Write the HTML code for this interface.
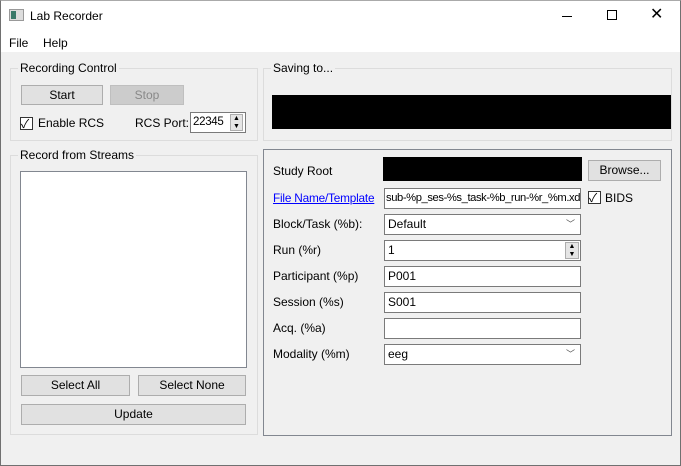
<!DOCTYPE html>
<html><head><style>
*{box-sizing:border-box;margin:0;padding:0}
body{width:681px;height:466px;background:#f0f0f0;font-family:"Liberation Sans","Noto Sans CJK JP",sans-serif;font-size:12px;color:#000;position:relative;overflow:hidden}
.a{position:absolute}
.win{left:0;top:0;width:681px;height:466px;border:1px solid #707070;border-top-color:#aaa}
.gb{border:1px solid #dcdcdc}
.lbl{background:#f0f0f0;padding:0 2px;white-space:nowrap}
.btn{background:#e1e1e1;border:1px solid #adadad;text-align:center;line-height:18px}
.inp{background:#fff;border:1px solid #7a7a7a;padding-left:3px;line-height:18px;white-space:nowrap;overflow:hidden}
.chk{width:13px;height:13px;border:1px solid #333;background:#fff}
</style></head><body>
<div class="a" style="left:0;top:0;width:681px;height:52px;background:#fff"></div>
<div class="a win"></div>
<div class="a" style="left:9px;top:9px;width:15px;height:12px;border:1px solid #999;background:#ddd"><div style="margin:1px;width:5px;height:8px;background:#3a7a6a"></div></div>
<div class="a" style="left:30px;top:9px;font-size:12px">Lab Recorder</div>
<div class="a" style="left:562px;top:16px;width:10px;height:1px;background:#000"></div>
<div class="a" style="left:607px;top:10px;width:10px;height:10px;border:1px solid #000"></div>
<div class="a" style="left:650px;top:4px;font-size:16px">✕</div>
<div class="a" style="left:9px;top:36px">File</div>
<div class="a" style="left:43px;top:36px">Help</div>
<div class="a gb" style="left:10px;top:68px;width:248px;height:73px"></div>
<div class="a lbl" style="left:18px;top:61px">Recording Control</div>
<div class="a btn" style="left:21px;top:85px;width:82px;height:20px">Start</div>
<div class="a btn" style="left:110px;top:85px;width:74px;height:20px;background:#ccc;border-color:#bfbfbf;color:#888">Stop</div>
<div class="a chk" style="left:20px;top:117px"><span style="position:absolute;left:0;top:-3px;font-size:12px">✓</span></div>
<div class="a" style="left:38px;top:116px">Enable RCS</div>
<div class="a" style="left:135px;top:116px">RCS Port:</div>
<div class="a inp" style="left:190px;top:112px;width:56px;height:21px;padding-left:2px;font-size:11.5px;letter-spacing:-0.3px">22345</div>
<div class="a" style="left:230px;top:114px;width:13px;height:17px;background:#e5e5e5;border:1px solid #adadad;font-size:7px;line-height:8px;text-align:center">▲<br>▼</div>
<div class="a gb" style="left:10px;top:155px;width:248px;height:280px"></div>
<div class="a lbl" style="left:18px;top:148px">Record from Streams</div>
<div class="a" style="left:20px;top:171px;width:227px;height:197px;background:#fff;border:1px solid #828790"></div>
<div class="a btn" style="left:21px;top:375px;width:109px;height:21px;line-height:19px">Select All</div>
<div class="a btn" style="left:138px;top:375px;width:108px;height:21px;line-height:19px">Select None</div>
<div class="a btn" style="left:21px;top:404px;width:225px;height:21px;line-height:19px">Update</div>
<div class="a gb" style="left:263px;top:68px;width:409px;height:73px"></div>
<div class="a lbl" style="left:271px;top:61px">Saving to...</div>
<div class="a" style="left:272px;top:95px;width:399px;height:34px;background:#000"></div>
<div class="a" style="left:263px;top:149px;width:409px;height:287px;border:1px solid #828790"></div>
<div class="a" style="left:273px;top:164px">Study Root</div>
<div class="a" style="left:383px;top:157px;width:199px;height:24px;background:#000"></div>
<div class="a btn" style="left:588px;top:160px;width:73px;height:21px;line-height:19px">Browse...</div>
<div class="a" style="left:273px;top:191px;color:#0000ff;text-decoration:underline;font-size:11.8px;letter-spacing:-0.2px">File Name/Template</div>
<div class="a inp" style="left:384px;top:188px;width:197px;height:21px;padding-left:1px;font-size:11.2px;letter-spacing:-0.4px">sub-%p_ses-%s_task-%b_run-%r_%m.xdf</div>
<div class="a chk" style="left:588px;top:191px"><span style="position:absolute;left:0;top:-3px">✓</span></div>
<div class="a" style="left:605px;top:191px">BIDS</div>
<div class="a" style="left:273px;top:217px">Block/Task (%b):</div>
<div class="a inp" style="left:384px;top:214px;width:197px;height:21px">Default<span style="position:absolute;right:5px;top:0;color:#555;font-size:9px">﹀</span></div>
<div class="a" style="left:273px;top:243px">Run (%r)</div>
<div class="a inp" style="left:384px;top:240px;width:197px;height:21px">1</div>
<div class="a" style="left:565px;top:242px;width:14px;height:17px;background:#e5e5e5;border:1px solid #adadad;font-size:7px;line-height:8px;text-align:center">▲<br>▼</div>
<div class="a" style="left:273px;top:269px">Participant (%p)</div>
<div class="a inp" style="left:384px;top:266px;width:197px;height:21px">P001</div>
<div class="a" style="left:273px;top:295px">Session (%s)</div>
<div class="a inp" style="left:384px;top:292px;width:197px;height:21px">S001</div>
<div class="a" style="left:273px;top:321px">Acq. (%a)</div>
<div class="a inp" style="left:384px;top:318px;width:197px;height:21px"></div>
<div class="a" style="left:273px;top:347px">Modality (%m)</div>
<div class="a inp" style="left:384px;top:344px;width:197px;height:21px">eeg<span style="position:absolute;right:5px;top:0;color:#555;font-size:9px">﹀</span></div>
</body></html>
